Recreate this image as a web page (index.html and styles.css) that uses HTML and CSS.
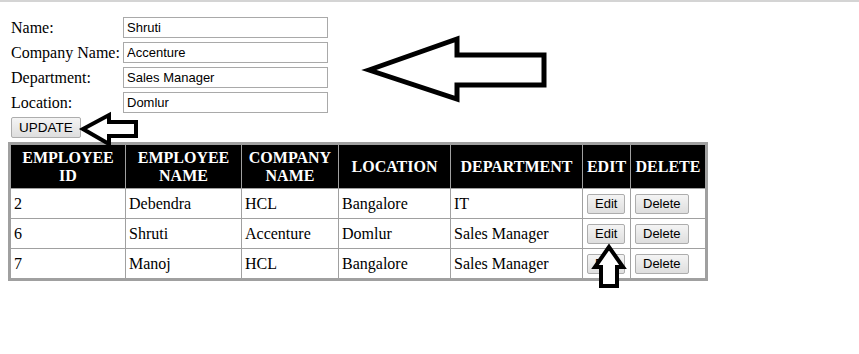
FILE: index.html
```html
<!DOCTYPE html>
<html>
<head>
<meta charset="utf-8">
<title>Employee</title>
<link rel="stylesheet" href="styles.css">
</head>
<body>
<div class="topline"></div>
<div class="page">
  <form class="form">
    <label class="lbl">Name:</label><input class="inp" type="text" value="Shruti">
    <label class="lbl">Company Name:</label><input class="inp" type="text" value="Accenture">
    <label class="lbl">Department:</label><input class="inp" type="text" value="Sales Manager">
    <label class="lbl">Location:</label><input class="inp" type="text" value="Domlur">
  </form>
  <div class="actions"><button class="btn update" type="button">UPDATE</button></div>
  <table class="grid">
    <colgroup>
      <col class="c1"><col class="c2"><col class="c3"><col class="c4"><col class="c5"><col class="c6"><col class="c7">
    </colgroup>
    <thead>
      <tr><th>EMPLOYEE<br>ID</th><th>EMPLOYEE<br>NAME</th><th>COMPANY<br>NAME</th><th>LOCATION</th><th>DEPARTMENT</th><th>EDIT</th><th>DELETE</th></tr>
    </thead>
    <tbody>
      <tr><td>2</td><td>Debendra</td><td>HCL</td><td>Bangalore</td><td>IT</td><td class="bc"><button class="btn small" type="button">Edit</button></td><td class="bc"><button class="btn small" type="button">Delete</button></td></tr>
      <tr><td>6</td><td>Shruti</td><td>Accenture</td><td>Domlur</td><td>Sales Manager</td><td class="bc"><button class="btn small" type="button">Edit</button></td><td class="bc"><button class="btn small" type="button">Delete</button></td></tr>
      <tr><td>7</td><td>Manoj</td><td>HCL</td><td>Bangalore</td><td>Sales Manager</td><td class="bc"><button class="btn small" type="button">Edit</button></td><td class="bc"><button class="btn small" type="button">Delete</button></td></tr>
    </tbody>
  </table>
</div>
<svg class="notes" width="859" height="354" viewBox="0 0 859 354" xmlns="http://www.w3.org/2000/svg">
  <path d="M369,70 L457,39 L457,55 L544,55 L544,85 L457,85 L457,99 Z" fill="#fff" stroke="#000" stroke-width="5" stroke-linejoin="miter"/>
  <path d="M83,129 L109,115 L109,122 L136,122 L136,136 L109,136 L109,144 Z" fill="#fff" stroke="#000" stroke-width="4" stroke-linejoin="miter"/>
  <path d="M609,247 L595,267 L601,267 L601,286 L617,286 L617,267 L623,267 Z" fill="#fff" stroke="#000" stroke-width="4" stroke-linejoin="miter"/>
</svg>
</body>
</html>
```

FILE: styles.css
```css
html, body {
  margin: 0;
  padding: 0;
  background: #fff;
}
body {
  font-family: "Liberation Serif", "Times New Roman", serif;
  font-size: 16px;
  color: #000;
  position: relative;
  width: 859px;
  height: 354px;
  overflow: hidden;
}
.topline {
  height: 2px;
  background: #d4d4d4;
}
.page {
  padding: 15px 8px 0 8px;
}
.form {
  display: grid;
  grid-template-columns: 112px 205px;
  row-gap: 4px;
  padding-left: 3px;
  margin: 0;
  align-items: center;
}
.lbl {
  font-size: 16px;
  line-height: 21px;
  white-space: nowrap;
}
.inp {
  box-sizing: border-box;
  width: 205px;
  height: 21px;
  margin: 0;
  border: 1px solid #a9a9a9;
  padding: 0 3px;
  font-family: "Liberation Sans", Arial, sans-serif;
  font-size: 13px;
  color: #000;
  background: #fff;
  outline: none;
}
.actions {
  padding: 4px 0 4px 3px;
  display: flex;
}
.btn {
  box-sizing: border-box;
  margin: 0;
  font-family: "Liberation Sans", Arial, sans-serif;
  font-size: 13px;
  color: #000;
  border: 1px solid #adadad;
  border-radius: 2px;
  background: linear-gradient(#f4f4f4, #dedede);
  padding: 0 7px;
  cursor: pointer;
}
.update {
  width: 70px;
  height: 21px;
  font-size: 13.5px;
}
.small {
  height: 20px;
  line-height: 18px;
}
.grid {
  border-collapse: collapse;
  table-layout: fixed;
  width: 700px;
  border: 3px solid #a0a0a0;
}
.c1 { width: 116px; }
.c2 { width: 116px; }
.c3 { width: 97px; }
.c4 { width: 112px; }
.c5 { width: 132px; }
.c6 { width: 48px; }
.c7 { width: 76px; }
.grid th,
.grid td {
  border: 1px solid #a0a0a0;
}
.grid th {
  background: #000;
  color: #fff;
  font-weight: bold;
  font-size: 16px;
  line-height: 18px;
  height: 43px;
  padding: 0;
  text-align: center;
  vertical-align: middle;
}
.grid td {
  height: 29px;
  padding: 0 3px;
  text-align: left;
  vertical-align: middle;
  font-size: 16px;
}
.grid td.bc {
  padding: 0 0 0 4px;
}
.notes {
  position: absolute;
  left: 0;
  top: 0;
  pointer-events: none;
}
```
